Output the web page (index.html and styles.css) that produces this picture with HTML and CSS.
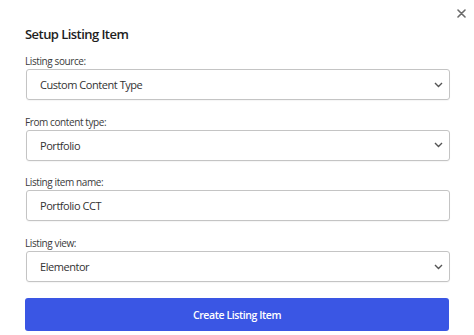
FILE: index.html
```html
<!DOCTYPE html>
<html>
<head>
<meta charset="utf-8">
<link rel="stylesheet" href="styles.css">
</head>
<body>
<div class="dialog">
  <button class="close" aria-label="Close">
    <svg width="9" height="9" viewBox="0 0 9 9"><path d="M1 1L8 8M8 1L1 8" stroke="#6b6b6b" stroke-width="1.6" stroke-linecap="round"/></svg>
  </button>
  <h1 class="title">Setup Listing Item</h1>
  <div class="fields">
    <div class="field">
      <label class="label">Listing source:</label>
      <div class="control">
        <span class="value">Custom Content Type</span>
        <svg class="chev" width="9" height="6" viewBox="0 0 9 6"><path d="M1 1L4.5 4.5L8 1" fill="none" stroke="#555" stroke-width="1.4"/></svg>
      </div>
    </div>
    <div class="field">
      <label class="label">From content type:</label>
      <div class="control">
        <span class="value">Portfolio</span>
        <svg class="chev" width="9" height="6" viewBox="0 0 9 6"><path d="M1 1L4.5 4.5L8 1" fill="none" stroke="#555" stroke-width="1.4"/></svg>
      </div>
    </div>
    <div class="field">
      <label class="label">Listing item name:</label>
      <div class="control">
        <span class="value">Portfolio CCT</span>
      </div>
    </div>
    <div class="field">
      <label class="label">Listing view:</label>
      <div class="control">
        <span class="value">Elementor</span>
        <svg class="chev" width="9" height="6" viewBox="0 0 9 6"><path d="M1 1L4.5 4.5L8 1" fill="none" stroke="#555" stroke-width="1.4"/></svg>
      </div>
    </div>
  </div>
  <button class="submit">Create Listing Item</button>
</div>
</body>
</html>
```
FILE: styles.css
```css
html, body {
  margin: 0;
  padding: 0;
  background: #ffffff;
}
body {
  font-family: "Open Sans", "Noto Sans", sans-serif;
  color: #2b2b2b;
}
.dialog {
  position: relative;
  width: 474px;
  height: 335px;
  box-sizing: border-box;
  padding: 24px 24px 0 26px;
}
.close {
  position: absolute;
  top: 5px;
  right: 5px;
  width: 16px;
  height: 16px;
  padding: 0;
  border: 0;
  background: transparent;
  display: flex;
  align-items: center;
  justify-content: center;
}
.title {
  margin: 0 0 10px -1px;
  font-size: 13px;
  line-height: 20px;
  font-weight: 600;
  letter-spacing: -0.55px;
  color: #1e1e1e;
}
.fields {
  display: flex;
  flex-direction: column;
  gap: 14.7px;
}
.field {
  display: flex;
  flex-direction: column;
}
.label {
  font-size: 10px;
  line-height: 15px;
  letter-spacing: -0.4px;
  color: #3a3a3a;
  margin-left: -1px;
}
.control {
  height: 31px;
  box-sizing: border-box;
  border: 1px solid #c4c4c4;
  border-radius: 3px;
  display: flex;
  align-items: center;
  justify-content: space-between;
  padding: 0 6px 0 13px;
  box-shadow: 0 1px 1px rgba(0,0,0,0.04);
}
.value {
  font-size: 11px;
  letter-spacing: -0.45px;
  color: #333333;
}
.chev {
  display: block;
}
.submit {
  margin-top: 16px;
  width: 100%;
  height: 33px;
  border: 0;
  border-radius: 3px;
  background: #3a56e4;
  color: #ffffff;
  font-family: "Open Sans", "Noto Sans", sans-serif;
  font-size: 10.5px;
  font-weight: 600;
  letter-spacing: -0.4px;
  margin-left: -1px;
}
```
